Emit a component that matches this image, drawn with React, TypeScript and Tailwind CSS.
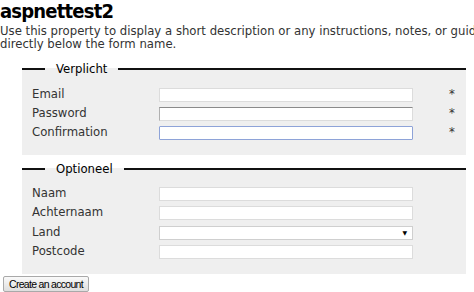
import React from 'react'

const required = [
  { label: 'Email', type: 'text', variant: 'plain' },
  { label: 'Password', type: 'password', variant: 'inset' },
  { label: 'Confirmation', type: 'password', variant: 'focus' },
]

const optional = ['Naam', 'Achternaam', 'Land', 'Postcode']

const inputClass: Record<string, string> = {
  plain: 'border border-[#dcdcdc]',
  inset: 'border border-[#dcdcdc] border-t-[#8a8a8a] border-l-[#b0b0b0]',
  focus: 'border border-[#8ea3d8] rounded-[1px]',
}

const App = () => {
  return (
    <div className="w-[474px] h-[292px] overflow-hidden bg-white font-['DejaVu_Sans',sans-serif] text-[#333]">
      <h1 className="font-['DejaVu_Sans_Condensed','DejaVu_Sans',sans-serif] font-bold text-[20px] leading-[22px] text-black tracking-[-0.8px]">
        aspnettest2
      </h1>
      <div className="text-[11.7px] leading-[13px] mt-[3px] whitespace-nowrap">
        <div>Use this property to display a short description or any instructions, notes, or guidance</div>
        <div>directly below the form name.</div>
      </div>

      <fieldset className="ml-[22px] mt-[11px] w-[444px] bg-[#efefef] border-0 border-t-2 border-[#111] pl-[10px] pt-[9px] pb-[13px]">
        <legend className="ml-[13px] px-[11px] text-[11.7px] leading-[14px] text-black">Verplicht</legend>
        {required.map((f) => (
          <div key={f.label} className="flex items-center h-[19px] text-[11.7px]">
            <span className="w-[127px]">{f.label}</span>
            <input
              type={f.type}
              className={`w-[254px] h-[14px] bg-white outline-none ${inputClass[f.variant]}`}
            />
            <span className="ml-[36px]">*</span>
          </div>
        ))}
      </fieldset>

      <fieldset className="ml-[22px] mt-[7px] w-[444px] bg-[#efefef] border-0 border-t-2 border-[#111] pl-[10px] pt-[8px] pb-[12px]">
        <legend className="ml-[13px] px-[11px] text-[11.7px] leading-[14px] text-black">Optioneel</legend>
        {optional.map((label) => (
          <div key={label} className="flex items-center h-[19.5px] text-[11.7px]">
            <span className="w-[127px]">{label}</span>
            {label === 'Land' ? (
              <div className="w-[254px] h-[14px] bg-white border border-[#cfcfcf] flex items-center justify-end pr-[5px]">
                <span className="text-[6px] leading-none text-black">▼</span>
              </div>
            ) : (
              <input type="text" className="w-[254px] h-[14px] bg-white outline-none border border-[#dcdcdc]" />
            )}
          </div>
        ))}
      </fieldset>

      <button className="block ml-[3px] mt-[2px] h-[16px] px-[5px] border border-[#a9a9a9] rounded-[2px] bg-gradient-to-b from-[#fafafa] to-[#dedede] font-['Liberation_Sans',Arial,sans-serif] text-[10.5px] leading-none text-black tracking-[-0.7px]">
        Create an account
      </button>
    </div>
  )
}

export default App
